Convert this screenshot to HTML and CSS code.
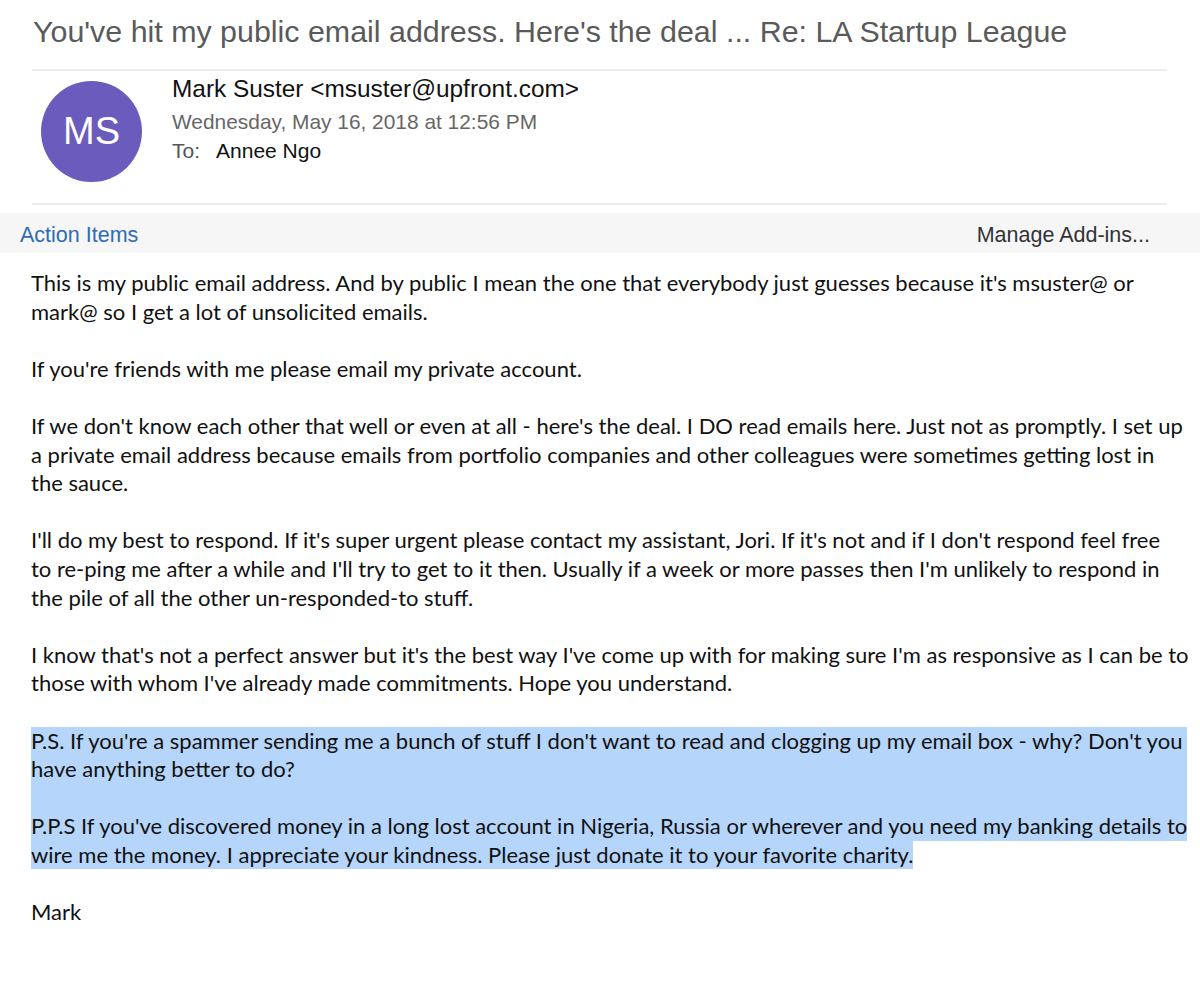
FILE: index.html
```html
<!DOCTYPE html>
<html lang="en">
<head>
<meta charset="utf-8">
<title>Email</title>
<link rel="stylesheet" href="styles.css">
</head>
<body>
<div class="page">
  <h1 class="subject">You've hit my public email address. Here's the deal ... Re: LA Startup League</h1>
  <div class="divider"></div>
  <div class="header">
    <div class="avatar">MS</div>
    <div class="meta">
      <div class="from">Mark Suster &lt;msuster@upfront.com&gt;</div>
      <div class="date">Wednesday, May 16, 2018 at 12:56 PM</div>
      <div class="to"><span class="to-label">To:</span><span class="to-name">Annee Ngo</span></div>
    </div>
  </div>
  <div class="divider"></div>
  <div class="actionbar">
    <span class="action-items">Action Items</span>
    <span class="addins">Manage Add-ins...</span>
  </div>
  <div class="body">
    <p>This is my public email address. And by public I mean the one that everybody just guesses because it's msuster@ or<br>mark@ so I get a lot of unsolicited emails.</p>
    <p>If you're friends with me please email my private account.</p>
    <p>If we don't know each other that well or even at all - here's the deal. I DO read emails here. Just not as promptly. I set up<br>a private email address because emails from portfolio companies and other colleagues were sometimes getting lost in<br>the sauce.</p>
    <p>I'll do my best to respond. If it's super urgent please contact my assistant, Jori. If it's not and if I don't respond feel free<br>to re-ping me after a while and I'll try to get to it then. Usually if a week or more passes then I'm unlikely to respond in<br>the pile of all the other un-responded-to stuff.</p>
    <p>I know that's not a perfect answer but it's the best way I've come up with for making sure I'm as responsive as I can be to<br>those with whom I've already made commitments. Hope you understand.</p>
    <div class="sel">
      <p>P.S. If you're a spammer sending me a bunch of stuff I don't want to read and clogging up my email box - why? Don't you<br>have anything better to do?</p>
      <p class="tail">P.P.S If you've discovered money in a long lost account in Nigeria, Russia or wherever and you need my banking details to</p>
    </div>
    <p><span class="sel-end">wire me the money. I appreciate your kindness. Please just donate it to your favorite charity.</span></p>
    <p>Mark</p>
  </div>
</div>
</body>
</html>
```
FILE: styles.css
```css
html, body {
  margin: 0;
  padding: 0;
  background: #ffffff;
}
.page {
  width: 1200px;
}
.subject {
  margin: 0;
  padding: 13px 0 0 33px;
  height: 69px;
  box-sizing: border-box;
  font-family: "Liberation Sans", Arial, sans-serif;
  font-weight: normal;
  font-size: 30.4px;
  line-height: 36px;
  color: #5a5a5a;
  white-space: nowrap;
}
.divider {
  margin: 0 33px 0 32px;
  height: 0;
  border-top: 2px solid #ededed;
}
.header {
  display: flex;
  align-items: flex-start;
  height: 132px;
  padding-left: 41px;
  box-sizing: border-box;
}
.avatar {
  width: 101px;
  height: 101px;
  margin-top: 10px;
  border-radius: 50%;
  background: #6b5bbd;
  color: #ffffff;
  font-family: "Liberation Sans", Arial, sans-serif;
  font-size: 38px;
  display: flex;
  align-items: center;
  justify-content: center;
}
.meta {
  margin-left: 30px;
  padding-top: 3px;
  font-family: "Liberation Sans", Arial, sans-serif;
}
.from {
  font-size: 24.4px;
  line-height: 30px;
  color: #111111;
}
.date {
  font-size: 20.9px;
  line-height: 36px;
  color: #666666;
}
.to {
  font-size: 21px;
  line-height: 22px;
  color: #555555;
}
.to-name {
  color: #111111;
  margin-left: 16px;
}
.actionbar {
  margin-top: 8px;
  height: 40px;
  box-sizing: border-box;
  padding: 5px 50px 0 20px;
  background: #f6f6f6;
  display: flex;
  align-items: center;
  justify-content: space-between;
  font-family: "Liberation Sans", Arial, sans-serif;
  font-size: 21.5px;
}
.action-items {
  color: #2d6cb5;
}
.addins {
  color: #333333;
}
.body {
  margin: 16px 13px 0 31px;
  font-family: Lato, "Liberation Sans", sans-serif;
  font-size: 22px;
  line-height: 28.6px;
  color: #111111;
}
.body p {
  margin: 0 0 28.6px 0;
  white-space: nowrap;
}
.sel {
  background: #b6d5fa;
}
.sel .tail {
  margin: 0;
}
.sel-end {
  display: inline-block;
  background: #b6d5fa;
}
```
